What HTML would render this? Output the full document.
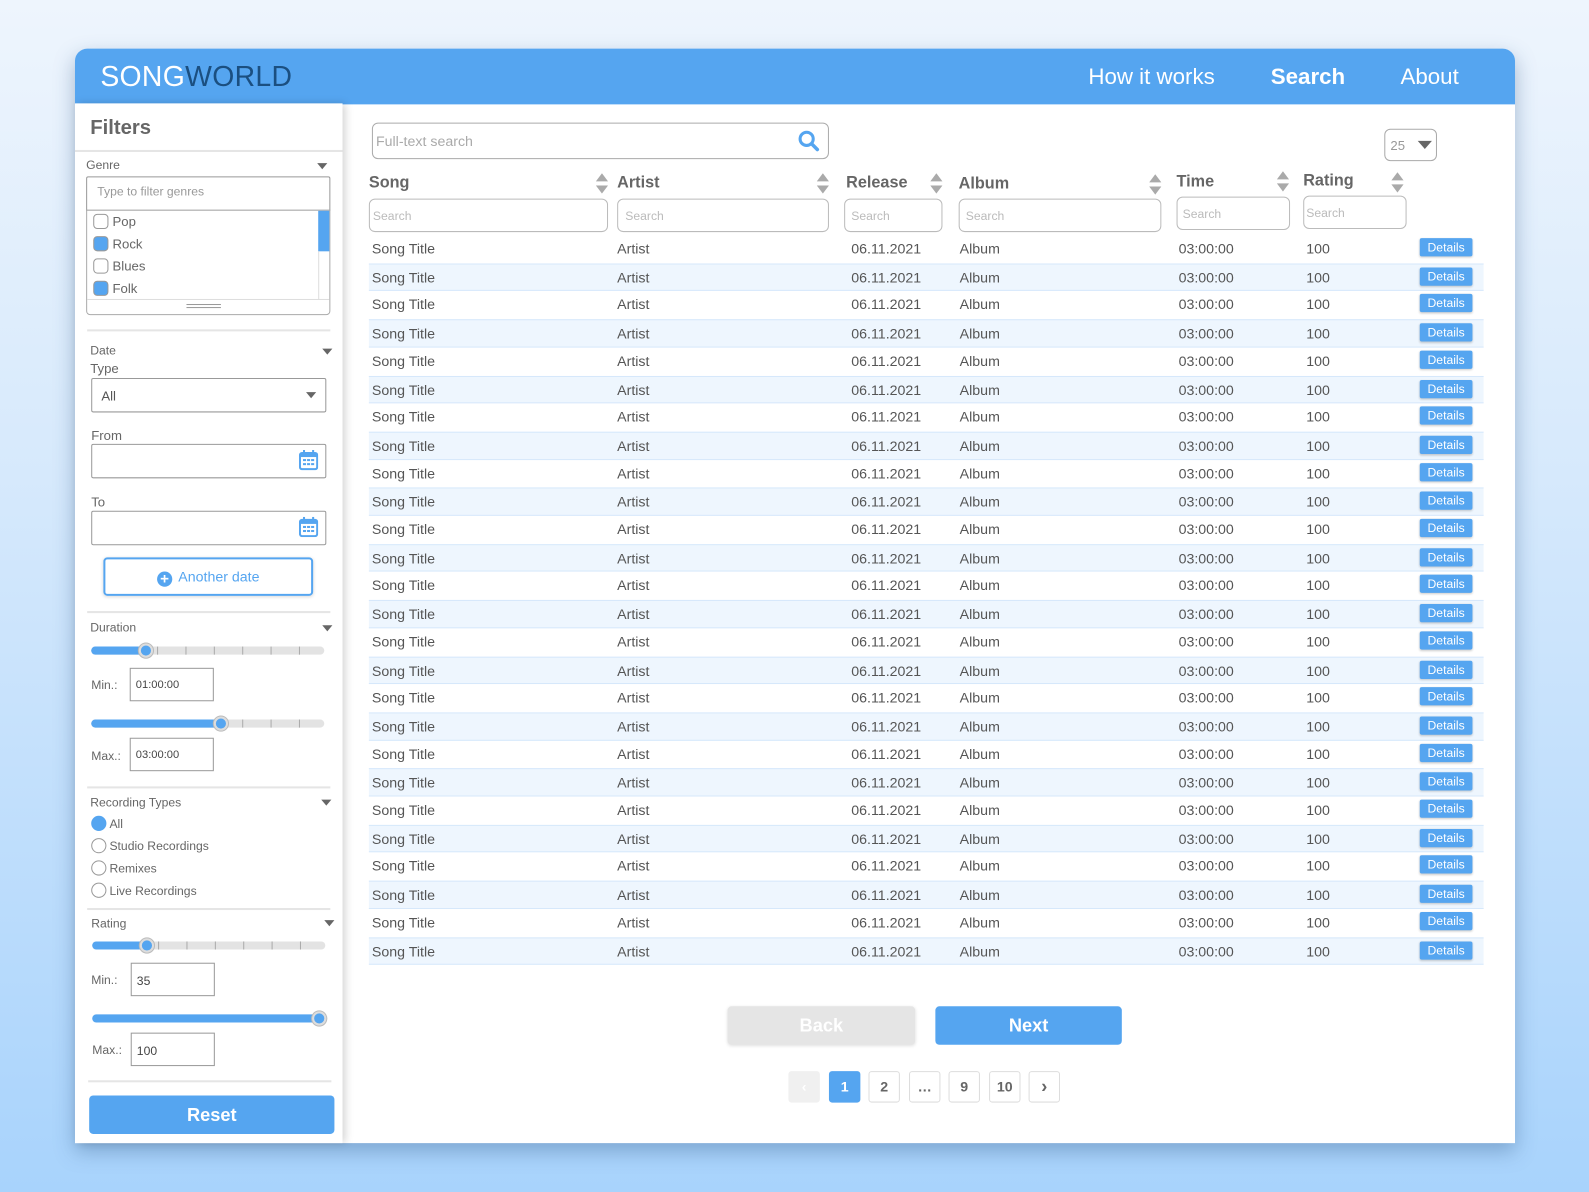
<!DOCTYPE html>
<html><head><meta charset="utf-8"><style>
*{box-sizing:border-box;margin:0;padding:0}
html,body{width:1589px;height:1192px;overflow:hidden}
body{background:linear-gradient(180deg,#eef5fd 0%,#d6e9fc 40%,#a8d3fc 100%);font-family:"Liberation Sans",sans-serif;color:#555}
#s{position:absolute;left:0;top:0;width:1568px;height:1176px;transform:scale(1.01339);transform-origin:0 0}
.a{position:absolute}
.card{left:74px;top:48px;width:1421px;height:1080px;background:#fff;border-radius:12px 12px 0 0;box-shadow:0 8px 20px rgba(40,80,130,.35)}
.hdr{left:74px;top:48px;width:1421px;height:55px;background:#55a5f0;border-radius:12px 12px 0 0}
.logo{left:99px;top:60px;font-size:28px;color:#fff;letter-spacing:.3px}
.logo b{font-weight:normal;color:#1b4f80}
.nav{top:63px;font-size:22px;color:#fff}
.side{left:74px;top:102px;width:264px;height:1026px;background:#fff;box-shadow:3px 0 8px rgba(0,0,0,.18)}
.hr{height:2px;background:#e5e5e5}
.lbl{font-size:12px;color:#666}
.tri{width:0;height:0;border-left:5px solid transparent;border-right:5px solid transparent;border-top:6px solid #666}
.box{border:1px solid #999;background:#fff}
.inp{border:1px solid #bbb;border-radius:6px;background:#fff;font-size:12px;color:#bbb;padding-left:3px;display:flex;align-items:center}
.th{font-size:16px;font-weight:bold;color:#666}
.sort{width:12px;height:20px}
.row{left:364px;width:1100px;height:27.7px;font-size:14px;color:#555}
.row.alt{background:#eef6fe;border-top:1px solid #d6e8fb;border-bottom:1px solid #d6e8fb}
.row span{position:absolute;top:5px}
.det{position:absolute;left:1037px;top:3px;width:52px;height:18px;background:#55a5f0;color:#fff;font-size:12px;text-align:center;line-height:18px;border-radius:2px;box-shadow:0 1px 2px rgba(0,0,0,.2)}
.track{height:8px;border-radius:4px;background:#e3e3e3}
.knob{width:14px;height:14px;border-radius:50%;background:#55a5f0;border:2px solid #ddd;box-shadow:0 0 0 1px #bbb}
.tick{width:1px;height:8px;background:#aaa}
.chk{width:15px;height:15px;border:1px solid #999;border-radius:4px}
.rad{width:15px;height:15px;border:1px solid #999;border-radius:50%}
.pg{width:31px;height:31px;border:1px solid #ddd;border-radius:3px;font-size:14px;font-weight:bold;color:#666;text-align:center;line-height:29px}
</style></head><body><div id="s">
<div class="a card"></div>
<div class="a hdr"></div>
<div class="a logo">SONG<b>WORLD</b></div>
<div class="a nav" style="left:1074px">How it works</div>
<div class="a nav" style="left:1254px;font-weight:bold">Search</div>
<div class="a nav" style="left:1382px">About</div>

<div class="a side"></div>
<div class="a" style="left:89px;top:115px;font-size:20px;font-weight:bold;color:#666">Filters</div>
<div class="a hr" style="left:74px;top:148px;width:264px"></div>
<div class="a lbl" style="left:85px;top:156px">Genre</div>
<div class="a tri" style="left:313px;top:161px"></div>
<div class="a box" style="left:85px;top:174px;width:241px;height:34px;border-radius:2px 2px 0 0;font-size:12px;color:#999;padding:7px 10px">Type to filter genres</div>
<div class="a box" style="left:85px;top:207px;width:241px;height:104px;border-radius:0 0 4px 4px;border-color:#aaa"></div>
<div class="a" style="left:314px;top:208px;width:11px;height:40px;background:#55a5f0"></div>
<div class="a" style="left:314px;top:248px;width:1px;height:48px;background:#ddd"></div>
<div class="a" style="left:86px;top:295px;width:239px;height:1px;background:#ddd"></div>
<div class="a" style="left:184px;top:300px;width:34px;height:4px;border-top:1px solid #999;border-bottom:1px solid #999"></div>
<div class="a chk" style="left:92px;top:211px"></div><div class="a lbl" style="left:111px;top:211px;font-size:13px">Pop</div>
<div class="a chk" style="left:92px;top:233px;background:#55a5f0"></div><div class="a lbl" style="left:111px;top:233px;font-size:13px">Rock</div>
<div class="a chk" style="left:92px;top:255px"></div><div class="a lbl" style="left:111px;top:255px;font-size:13px">Blues</div>
<div class="a chk" style="left:92px;top:277px;background:#55a5f0"></div><div class="a lbl" style="left:111px;top:277px;font-size:13px">Folk</div>

<div class="a hr" style="left:86px;top:325px;width:240px"></div>
<div class="a lbl" style="left:89px;top:339px">Date</div>
<div class="a tri" style="left:318px;top:344px"></div>
<div class="a lbl" style="left:89px;top:356px;font-size:13px">Type</div>
<div class="a box" style="left:90px;top:373px;width:232px;height:34px;border-radius:2px;font-size:13px;color:#555;padding:9px 9px">All</div>
<div class="a tri" style="left:302px;top:387px"></div>
<div class="a lbl" style="left:90px;top:422px;font-size:13px">From</div>
<div class="a box" style="left:90px;top:438px;width:232px;height:34px;border-radius:2px"></div>
<div class="a lbl" style="left:90px;top:488px;font-size:13px">To</div>
<div class="a box" style="left:90px;top:504px;width:232px;height:34px;border-radius:2px"></div>
<svg class="a" style="left:295px;top:444px" width="19" height="20" viewBox="0 0 19 20"><rect x="1" y="3" width="17" height="16" rx="2" fill="none" stroke="#55a5f0" stroke-width="2"/><rect x="1" y="3" width="17" height="4" fill="#55a5f0"/><rect x="4" y="0" width="2" height="5" fill="#55a5f0"/><rect x="13" y="0" width="2" height="5" fill="#55a5f0"/><g fill="#55a5f0"><rect x="4" y="9" width="3" height="2"/><rect x="8" y="9" width="3" height="2"/><rect x="12" y="9" width="3" height="2"/><rect x="4" y="13" width="3" height="2"/><rect x="8" y="13" width="3" height="2"/><rect x="12" y="13" width="3" height="2"/></g></svg>
<svg class="a" style="left:295px;top:510px" width="19" height="20" viewBox="0 0 19 20"><rect x="1" y="3" width="17" height="16" rx="2" fill="none" stroke="#55a5f0" stroke-width="2"/><rect x="1" y="3" width="17" height="4" fill="#55a5f0"/><rect x="4" y="0" width="2" height="5" fill="#55a5f0"/><rect x="13" y="0" width="2" height="5" fill="#55a5f0"/><g fill="#55a5f0"><rect x="4" y="9" width="3" height="2"/><rect x="8" y="9" width="3" height="2"/><rect x="12" y="9" width="3" height="2"/><rect x="4" y="13" width="3" height="2"/><rect x="8" y="13" width="3" height="2"/><rect x="12" y="13" width="3" height="2"/></g></svg>
<div class="a" style="left:102px;top:550px;width:207px;height:38px;border:2px solid #55a5f0;border-radius:4px;box-shadow:0 1px 3px rgba(0,0,0,.15);color:#55a5f0;font-size:14px;text-align:center;line-height:34px"><span style="display:inline-block;width:15px;height:15px;border-radius:50%;background:#55a5f0;color:#fff;font-weight:bold;line-height:15px;font-size:15px;vertical-align:-2px;margin-right:6px">+</span>Another date</div>

<div class="a hr" style="left:86px;top:603px;width:240px"></div>
<div class="a lbl" style="left:89px;top:612px">Duration</div>
<div class="a tri" style="left:318px;top:617px"></div>
<div class="a track" style="left:90px;top:638px;width:230px"></div>
<div class="a" style="left:90px;top:638px;width:54px;height:8px;border-radius:4px;background:#55a5f0"></div>
<div class="a tick" style="left:155px;top:638px"></div><div class="a tick" style="left:183px;top:638px"></div><div class="a tick" style="left:211px;top:638px"></div><div class="a tick" style="left:239px;top:638px"></div><div class="a tick" style="left:267px;top:638px"></div><div class="a tick" style="left:295px;top:638px"></div>
<div class="a knob" style="left:137px;top:635px"></div>
<div class="a lbl" style="left:90px;top:669px;font-size:12px">Min.:</div>
<div class="a box" style="left:128px;top:659px;width:83px;height:33px;font-size:11px;color:#444;padding:10px 5px">01:00:00</div>
<div class="a track" style="left:90px;top:710px;width:230px"></div>
<div class="a" style="left:90px;top:710px;width:128px;height:8px;border-radius:4px;background:#55a5f0"></div>
<div class="a tick" style="left:239px;top:710px"></div><div class="a tick" style="left:267px;top:710px"></div><div class="a tick" style="left:295px;top:710px"></div>
<div class="a knob" style="left:211px;top:707px"></div>
<div class="a lbl" style="left:90px;top:739px;font-size:12px">Max.:</div>
<div class="a box" style="left:128px;top:728px;width:83px;height:33px;font-size:11px;color:#444;padding:10px 5px">03:00:00</div>

<div class="a hr" style="left:86px;top:776px;width:240px"></div>
<div class="a lbl" style="left:89px;top:785px">Recording Types</div>
<div class="a tri" style="left:317px;top:789px"></div>
<div class="a rad" style="left:90px;top:805px;background:#55a5f0;border-color:#55a5f0"></div><div class="a lbl" style="left:108px;top:806px;font-size:12px">All</div>
<div class="a rad" style="left:90px;top:827px"></div><div class="a lbl" style="left:108px;top:828px;font-size:12px">Studio Recordings</div>
<div class="a rad" style="left:90px;top:849px"></div><div class="a lbl" style="left:108px;top:850px;font-size:12px">Remixes</div>
<div class="a rad" style="left:90px;top:871px"></div><div class="a lbl" style="left:108px;top:872px;font-size:12px">Live Recordings</div>

<div class="a hr" style="left:86px;top:896px;width:240px"></div>
<div class="a lbl" style="left:90px;top:904px">Rating</div>
<div class="a tri" style="left:320px;top:908px"></div>
<div class="a track" style="left:91px;top:929px;width:230px"></div>
<div class="a" style="left:91px;top:929px;width:54px;height:8px;border-radius:4px;background:#55a5f0"></div>
<div class="a tick" style="left:156px;top:929px"></div><div class="a tick" style="left:184px;top:929px"></div><div class="a tick" style="left:212px;top:929px"></div><div class="a tick" style="left:240px;top:929px"></div><div class="a tick" style="left:268px;top:929px"></div><div class="a tick" style="left:296px;top:929px"></div>
<div class="a knob" style="left:138px;top:926px"></div>
<div class="a lbl" style="left:90px;top:960px;font-size:12px">Min.:</div>
<div class="a box" style="left:129px;top:950px;width:83px;height:33px;font-size:12px;color:#444;padding:10px 5px">35</div>
<div class="a" style="left:91px;top:1001px;width:228px;height:8px;border-radius:4px;background:#55a5f0"></div>
<div class="a knob" style="left:308px;top:998px"></div>
<div class="a lbl" style="left:91px;top:1029px;font-size:12px">Max.:</div>
<div class="a box" style="left:129px;top:1019px;width:83px;height:33px;font-size:12px;color:#444;padding:10px 5px">100</div>
<div class="a hr" style="left:87px;top:1066px;width:240px"></div>
<div class="a" style="left:88px;top:1081px;width:242px;height:38px;background:#55a5f0;border-radius:4px;color:#fff;font-size:18px;font-weight:bold;text-align:center;line-height:38px">Reset</div>

<div class="a inp" style="left:367px;top:121px;width:451px;height:36px;font-size:14px;color:#aaa;border-color:#aaa">Full-text search</div>
<svg class="a" style="left:787px;top:128px" width="22" height="22" viewBox="0 0 22 22"><circle cx="9" cy="9" r="6.5" fill="none" stroke="#55a5f0" stroke-width="3"/><path d="M14 14l5.5 5.5" stroke="#55a5f0" stroke-width="3.5" stroke-linecap="round"/></svg>
<div class="a inp" style="left:1366px;top:127px;width:52px;height:32px;border-color:#aaa;color:#999;font-size:13px;padding-left:5px">25</div>
<div class="a" style="left:1399px;top:139px;width:0;height:0;border-left:7px solid transparent;border-right:7px solid transparent;border-top:8px solid #666"></div>

<div class="a th" style="left:364px;top:172px">Song</div>
<div class="a th" style="left:609px;top:172px">Artist</div>
<div class="a th" style="left:835px;top:172px">Release</div>
<div class="a th" style="left:946px;top:173px">Album</div>
<div class="a th" style="left:1161px;top:171px">Time</div>
<div class="a th" style="left:1286px;top:170px">Rating</div>
<svg class="a sort" style="left:588px;top:171px" viewBox="0 0 12 20"><path d="M6 0L12 8H0z M6 20L12 12H0z" fill="#aaa"/></svg>
<svg class="a sort" style="left:806px;top:171px" viewBox="0 0 12 20"><path d="M6 0L12 8H0z M6 20L12 12H0z" fill="#aaa"/></svg>
<svg class="a sort" style="left:918px;top:171px" viewBox="0 0 12 20"><path d="M6 0L12 8H0z M6 20L12 12H0z" fill="#aaa"/></svg>
<svg class="a sort" style="left:1134px;top:172px" viewBox="0 0 12 20"><path d="M6 0L12 8H0z M6 20L12 12H0z" fill="#aaa"/></svg>
<svg class="a sort" style="left:1260px;top:169px" viewBox="0 0 12 20"><path d="M6 0L12 8H0z M6 20L12 12H0z" fill="#aaa"/></svg>
<svg class="a sort" style="left:1373px;top:170px" viewBox="0 0 12 20"><path d="M6 0L12 8H0z M6 20L12 12H0z" fill="#aaa"/></svg>
<div class="a inp" style="left:364px;top:196px;width:236px;height:33px">Search</div>
<div class="a inp" style="left:609px;top:196px;width:209px;height:33px;padding-left:7px">Search</div>
<div class="a inp" style="left:833px;top:196px;width:97px;height:33px;padding-left:6px">Search</div>
<div class="a inp" style="left:946px;top:196px;width:200px;height:33px;padding-left:6px">Search</div>
<div class="a inp" style="left:1161px;top:194px;width:112px;height:33px;padding-left:5px">Search</div>
<div class="a inp" style="left:1286px;top:193px;width:102px;height:33px;padding-left:2px">Search</div>

<div class="a row" style="top:232px"><span style="left:3px">Song Title</span><span style="left:245px">Artist</span><span style="left:476px">06.11.2021</span><span style="left:583px">Album</span><span style="left:799px">03:00:00</span><span style="left:925px">100</span><div class="det">Details</div></div>
<div class="a row alt" style="top:259.7px"><span style="left:3px">Song Title</span><span style="left:245px">Artist</span><span style="left:476px">06.11.2021</span><span style="left:583px">Album</span><span style="left:799px">03:00:00</span><span style="left:925px">100</span><div class="det">Details</div></div>
<div class="a row" style="top:287.4px"><span style="left:3px">Song Title</span><span style="left:245px">Artist</span><span style="left:476px">06.11.2021</span><span style="left:583px">Album</span><span style="left:799px">03:00:00</span><span style="left:925px">100</span><div class="det">Details</div></div>
<div class="a row alt" style="top:315.1px"><span style="left:3px">Song Title</span><span style="left:245px">Artist</span><span style="left:476px">06.11.2021</span><span style="left:583px">Album</span><span style="left:799px">03:00:00</span><span style="left:925px">100</span><div class="det">Details</div></div>
<div class="a row" style="top:342.8px"><span style="left:3px">Song Title</span><span style="left:245px">Artist</span><span style="left:476px">06.11.2021</span><span style="left:583px">Album</span><span style="left:799px">03:00:00</span><span style="left:925px">100</span><div class="det">Details</div></div>
<div class="a row alt" style="top:370.5px"><span style="left:3px">Song Title</span><span style="left:245px">Artist</span><span style="left:476px">06.11.2021</span><span style="left:583px">Album</span><span style="left:799px">03:00:00</span><span style="left:925px">100</span><div class="det">Details</div></div>
<div class="a row" style="top:398.2px"><span style="left:3px">Song Title</span><span style="left:245px">Artist</span><span style="left:476px">06.11.2021</span><span style="left:583px">Album</span><span style="left:799px">03:00:00</span><span style="left:925px">100</span><div class="det">Details</div></div>
<div class="a row alt" style="top:425.9px"><span style="left:3px">Song Title</span><span style="left:245px">Artist</span><span style="left:476px">06.11.2021</span><span style="left:583px">Album</span><span style="left:799px">03:00:00</span><span style="left:925px">100</span><div class="det">Details</div></div>
<div class="a row" style="top:453.6px"><span style="left:3px">Song Title</span><span style="left:245px">Artist</span><span style="left:476px">06.11.2021</span><span style="left:583px">Album</span><span style="left:799px">03:00:00</span><span style="left:925px">100</span><div class="det">Details</div></div>
<div class="a row alt" style="top:481.3px"><span style="left:3px">Song Title</span><span style="left:245px">Artist</span><span style="left:476px">06.11.2021</span><span style="left:583px">Album</span><span style="left:799px">03:00:00</span><span style="left:925px">100</span><div class="det">Details</div></div>
<div class="a row" style="top:509px"><span style="left:3px">Song Title</span><span style="left:245px">Artist</span><span style="left:476px">06.11.2021</span><span style="left:583px">Album</span><span style="left:799px">03:00:00</span><span style="left:925px">100</span><div class="det">Details</div></div>
<div class="a row alt" style="top:536.7px"><span style="left:3px">Song Title</span><span style="left:245px">Artist</span><span style="left:476px">06.11.2021</span><span style="left:583px">Album</span><span style="left:799px">03:00:00</span><span style="left:925px">100</span><div class="det">Details</div></div>
<div class="a row" style="top:564.4px"><span style="left:3px">Song Title</span><span style="left:245px">Artist</span><span style="left:476px">06.11.2021</span><span style="left:583px">Album</span><span style="left:799px">03:00:00</span><span style="left:925px">100</span><div class="det">Details</div></div>
<div class="a row alt" style="top:592.1px"><span style="left:3px">Song Title</span><span style="left:245px">Artist</span><span style="left:476px">06.11.2021</span><span style="left:583px">Album</span><span style="left:799px">03:00:00</span><span style="left:925px">100</span><div class="det">Details</div></div>
<div class="a row" style="top:619.8px"><span style="left:3px">Song Title</span><span style="left:245px">Artist</span><span style="left:476px">06.11.2021</span><span style="left:583px">Album</span><span style="left:799px">03:00:00</span><span style="left:925px">100</span><div class="det">Details</div></div>
<div class="a row alt" style="top:647.5px"><span style="left:3px">Song Title</span><span style="left:245px">Artist</span><span style="left:476px">06.11.2021</span><span style="left:583px">Album</span><span style="left:799px">03:00:00</span><span style="left:925px">100</span><div class="det">Details</div></div>
<div class="a row" style="top:675.2px"><span style="left:3px">Song Title</span><span style="left:245px">Artist</span><span style="left:476px">06.11.2021</span><span style="left:583px">Album</span><span style="left:799px">03:00:00</span><span style="left:925px">100</span><div class="det">Details</div></div>
<div class="a row alt" style="top:702.9px"><span style="left:3px">Song Title</span><span style="left:245px">Artist</span><span style="left:476px">06.11.2021</span><span style="left:583px">Album</span><span style="left:799px">03:00:00</span><span style="left:925px">100</span><div class="det">Details</div></div>
<div class="a row" style="top:730.6px"><span style="left:3px">Song Title</span><span style="left:245px">Artist</span><span style="left:476px">06.11.2021</span><span style="left:583px">Album</span><span style="left:799px">03:00:00</span><span style="left:925px">100</span><div class="det">Details</div></div>
<div class="a row alt" style="top:758.3px"><span style="left:3px">Song Title</span><span style="left:245px">Artist</span><span style="left:476px">06.11.2021</span><span style="left:583px">Album</span><span style="left:799px">03:00:00</span><span style="left:925px">100</span><div class="det">Details</div></div>
<div class="a row" style="top:786px"><span style="left:3px">Song Title</span><span style="left:245px">Artist</span><span style="left:476px">06.11.2021</span><span style="left:583px">Album</span><span style="left:799px">03:00:00</span><span style="left:925px">100</span><div class="det">Details</div></div>
<div class="a row alt" style="top:813.7px"><span style="left:3px">Song Title</span><span style="left:245px">Artist</span><span style="left:476px">06.11.2021</span><span style="left:583px">Album</span><span style="left:799px">03:00:00</span><span style="left:925px">100</span><div class="det">Details</div></div>
<div class="a row" style="top:841.4px"><span style="left:3px">Song Title</span><span style="left:245px">Artist</span><span style="left:476px">06.11.2021</span><span style="left:583px">Album</span><span style="left:799px">03:00:00</span><span style="left:925px">100</span><div class="det">Details</div></div>
<div class="a row alt" style="top:869.1px"><span style="left:3px">Song Title</span><span style="left:245px">Artist</span><span style="left:476px">06.11.2021</span><span style="left:583px">Album</span><span style="left:799px">03:00:00</span><span style="left:925px">100</span><div class="det">Details</div></div>
<div class="a row" style="top:896.8px"><span style="left:3px">Song Title</span><span style="left:245px">Artist</span><span style="left:476px">06.11.2021</span><span style="left:583px">Album</span><span style="left:799px">03:00:00</span><span style="left:925px">100</span><div class="det">Details</div></div>
<div class="a row alt" style="top:924.5px"><span style="left:3px">Song Title</span><span style="left:245px">Artist</span><span style="left:476px">06.11.2021</span><span style="left:583px">Album</span><span style="left:799px">03:00:00</span><span style="left:925px">100</span><div class="det">Details</div></div>

<div class="a" style="left:718px;top:993px;width:185px;height:38px;background:#e5e5e5;border-radius:4px;color:#fff;font-size:18px;font-weight:bold;text-align:center;line-height:38px;box-shadow:0 1px 3px rgba(0,0,0,.12)">Back</div>
<div class="a" style="left:923px;top:993px;width:184px;height:38px;background:#55a5f0;border-radius:4px;color:#fff;font-size:18px;font-weight:bold;text-align:center;line-height:38px">Next</div>
<div class="a pg" style="left:778px;top:1057px;background:#f0f0f0;border-color:#f0f0f0;color:#fff">&lsaquo;</div>
<div class="a pg" style="left:818px;top:1057px;background:#55a5f0;border-color:#55a5f0;color:#fff">1</div>
<div class="a pg" style="left:857px;top:1057px">2</div>
<div class="a pg" style="left:897px;top:1057px">…</div>
<div class="a pg" style="left:936px;top:1057px">9</div>
<div class="a pg" style="left:976px;top:1057px">10</div>
<div class="a pg" style="left:1015px;top:1057px;font-size:18px">&rsaquo;</div>
</div></body></html>
